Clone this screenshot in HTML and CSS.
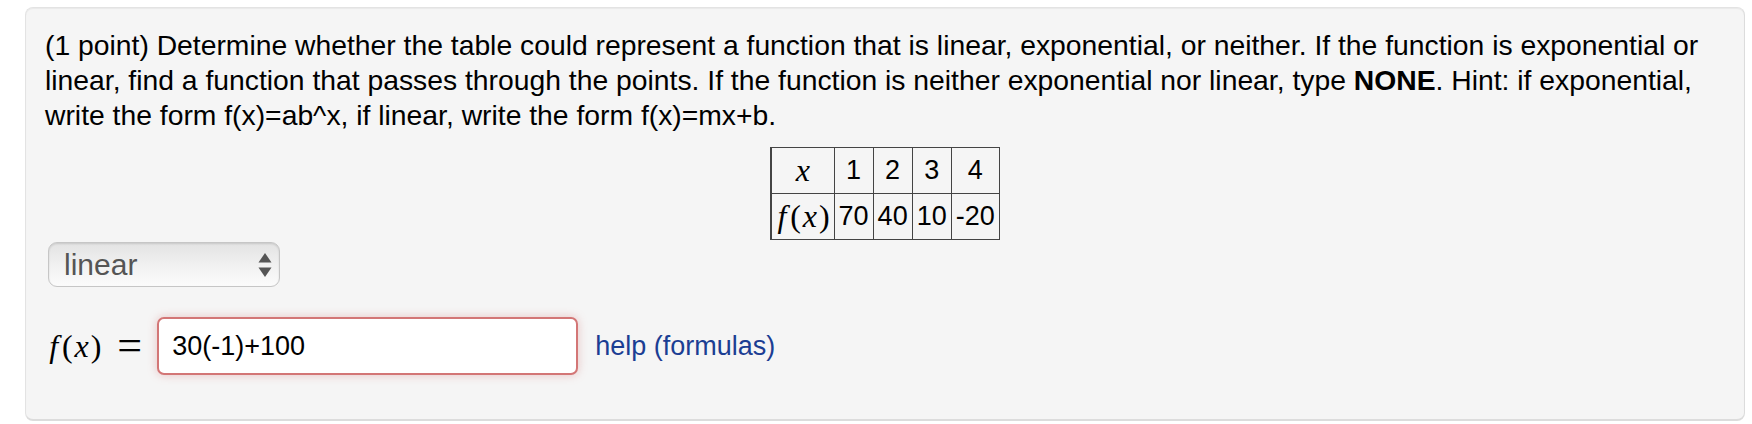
FILE: index.html
```html
<!DOCTYPE html>
<html lang="en">
<head>
    <meta charset="UTF-8">
    <meta name="viewport" content="width=device-width, initial-scale=1.0">
    <title>Problem 1</title>
    <link rel="stylesheet" href="styles.css">
</head>
<body>
    <div class="problem">
        <p class="statement">
            (1 point) Determine whether the table could represent a function that is linear, exponential, or neither.
            If the function is exponential or linear, find a function that passes through the points.
            If the function is neither exponential nor linear, type <b>NONE</b>.
            Hint: if exponential, write the form f(x)=ab^x, if linear, write the form f(x)=mx+b.
        </p>

        <table class="values">
            <tr>
                <td><span class="math"><i class="var">x</i></span></td>
                <td>1</td>
                <td>2</td>
                <td>3</td>
                <td>4</td>
            </tr>
            <tr>
                <td><span class="math"><i class="fn">f</i>(<i class="var">x</i>)</span></td>
                <td>70</td>
                <td>40</td>
                <td>10</td>
                <td>-20</td>
            </tr>
        </table>

        <div class="choice">
            <div class="select">
                <span>linear</span>
                <svg class="arrows" width="14" height="26" viewBox="0 0 14 26">
                    <path d="M7 1 L13.5 10.5 L0.5 10.5 Z" fill="#555"/>
                    <path d="M7 25 L13.5 15.5 L0.5 15.5 Z" fill="#555"/>
                </svg>
            </div>
        </div>

        <div class="answer">
            <span class="math label"><i class="fn">f</i>(<i class="var">x</i>)<span class="eq">=</span></span>
            <input type="text" class="incorrect" value="30(-1)+100">
            <a href="#" class="help">help (formulas)</a>
        </div>
    </div>
</body>
</html>
```

FILE: styles.css
```css
body {
    margin: 7px 7px 0 25px;
    background: #fff;
    font-family: "Liberation Sans", Arial, sans-serif;
    color: #000;
}

.problem {
    height: 414px;
    box-sizing: border-box;
    padding: 20px 19px;
    background-color: #f5f5f5;
    border: 1px solid #e3e3e3;
    border-right-color: #dcdcdc;
    border-bottom: 2px solid #dcdcdc;
    border-radius: 8px;
    box-shadow: inset 0 1px 1px rgba(0, 0, 0, 0.05);
}

.statement {
    margin: 0;
    font-size: 28.3px;
    line-height: 35px;
}

.values {
    margin: 14px auto 0;
    border-collapse: collapse;
    font-size: 27px;
}

.values td {
    height: 45px;
    padding: 0 4px;
    text-align: center;
    border: 1px solid #444;
}

.values tr:first-child td:nth-child(2),
.values tr:first-child td:nth-child(3),
.values tr:last-child td:nth-child(2),
.values tr:last-child td:nth-child(3) {
    border-left-color: #c8c8c8;
}

.values td:first-child {
    border-left-width: 2px;
}

.math {
    font-family: "Liberation Serif", "Times New Roman", serif;
    font-size: 32px;
    white-space: nowrap;
}

.math .fn {
    margin: 0 0.12em 0 0.04em;
}

.math .var {
    margin: 0 0.06em;
}

.choice {
    margin-top: 2px;
}

.select {
    display: flex;
    align-items: center;
    justify-content: space-between;
    width: 232px;
    height: 45px;
    box-sizing: border-box;
    padding: 0 7px 0 15px;
    margin-left: 3px;
    border: 1px solid #c6c6c6;
    border-radius: 9px;
    background: linear-gradient(#e3e3e3, #f3f3f3 60%, #fbfbfb);
    box-shadow: inset 0 1px 2px rgba(0, 0, 0, 0.12);
    color: #555;
    font-size: 30px;
}

.answer {
    display: flex;
    align-items: center;
    margin-top: 30px;
    margin-left: 3px;
}

.label {
    display: flex;
    align-items: center;
    margin-right: 15px;
}

.eq {
    font-style: normal;
    font-size: 44px;
    line-height: 1;
    margin-left: 16px;
}

.answer input {
    width: 421px;
    height: 58px;
    box-sizing: border-box;
    padding: 0 13px;
    font-family: "Liberation Sans", Arial, sans-serif;
    font-size: 27px;
    color: #000;
    background: #fff;
    border: 2px solid #d37676;
    border-radius: 7px;
    box-shadow: 0 0 10px rgba(214, 120, 120, 0.4);
    outline: none;
}

.help {
    margin-left: 17px;
    font-size: 27px;
    color: #1b3e93;
    text-decoration: none;
}
```
